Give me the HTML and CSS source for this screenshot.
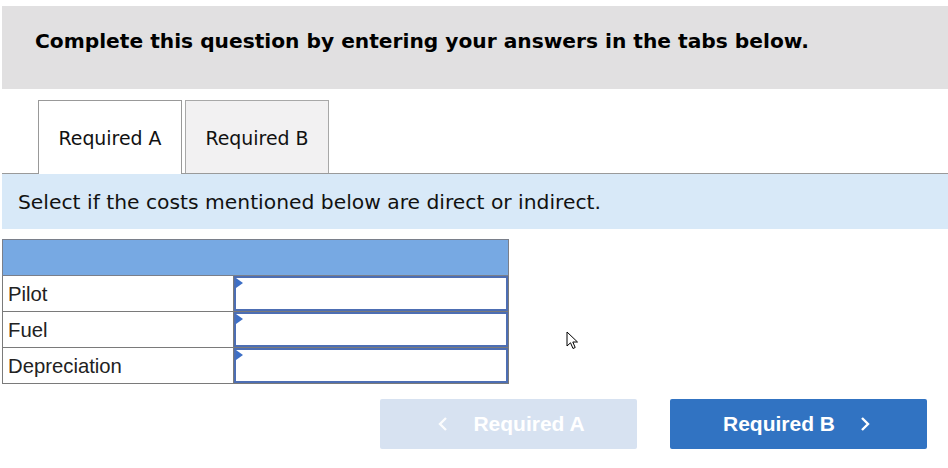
FILE: index.html
```html
<!DOCTYPE html>
<html>
<head>
<meta charset="utf-8">
<link rel="stylesheet" href="styles.css">
</head>
<body>
<div class="page">
  <div class="banner">
    <h1 class="title">Complete this question by entering your answers in the tabs below.</h1>
  </div>
  <div class="tabs">
    <div class="tab active">Required A</div>
    <div class="tab">Required B</div>
  </div>
  <div class="instr">Select if the costs mentioned below are direct or indirect.</div>
  <table class="grid">
    <colgroup><col class="w1"><col class="w2"></colgroup>
    <tr class="head"><td colspan="2"></td></tr>
    <tr><td class="c1">Pilot</td><td class="c2"><div class="sel"><span class="tri"></span></div></td></tr>
    <tr><td class="c1">Fuel</td><td class="c2"><div class="sel"><span class="tri"></span></div></td></tr>
    <tr><td class="c1">Depreciation</td><td class="c2"><div class="sel"><span class="tri"></span></div></td></tr>
  </table>
  <div class="nav">
    <button class="btn prev"><svg class="chev" width="10" height="16" viewBox="0 0 10 16"><polyline points="8,2 2,8 8,14" fill="none" stroke="#fff" stroke-width="2.4"/></svg><span>Required A</span></button>
    <button class="btn next"><span>Required B</span><svg class="chev" width="10" height="16" viewBox="0 0 10 16"><polyline points="2,2 8,8 2,14" fill="none" stroke="#fff" stroke-width="2.4"/></svg></button>
  </div>
  <svg class="cursor" width="14" height="20" viewBox="0 0 14 20"><path d="M1 1 L1 15 L4.5 11.8 L7 17.5 L9.2 16.5 L6.8 11 L11.5 11 Z" fill="#fff" stroke="#000" stroke-width="1"/></svg>
</div>
</body>
</html>
```

FILE: styles.css
```css
html, body { margin: 0; padding: 0; background: #fff; }
.page {
  position: relative;
  width: 948px;
  height: 468px;
  padding: 6px 0 0 2px;
  box-sizing: border-box;
}
.banner {
  background: #e1e0e1;
  height: 83px;
  box-sizing: border-box;
  padding: 23px 0 0 33px;
}
.title {
  margin: 0;
  font-family: "DejaVu Sans", Verdana, sans-serif;
  font-weight: bold;
  font-size: 20.2px;
  line-height: 24px;
  color: #000;
}
.tabs {
  display: flex;
  gap: 3px;
  margin-top: 11px;
  padding-left: 36px;
  border-bottom: 1px solid #9a9a9a;
  height: 73px;
  box-sizing: content-box;
}
.tab {
  width: 144px;
  height: 73px;
  box-sizing: border-box;
  border: 1px solid #a8a8a8;
  border-bottom: none;
  background: #f2f1f2;
  font-family: "DejaVu Sans", Verdana, sans-serif;
  font-size: 18.9px;
  color: #111;
  display: flex;
  align-items: center;
  justify-content: center;
  padding-top: 1px;
}
.tab.active {
  background: #fff;
  height: 74px;
  border-color: #999;
  margin-bottom: -1px;
  position: relative;
}
.instr {
  background: #d8e9f8;
  height: 55px;
  box-sizing: border-box;
  padding: 16px 0 0 16px;
  font-family: "DejaVu Sans", Verdana, sans-serif;
  font-size: 20.3px;
  line-height: 24px;
  color: #111;
}
.grid {
  margin-top: 10px;
  border-collapse: collapse;
  width: 507px;
  table-layout: fixed;
}
.grid .w1 { width: 231px; }
.grid td {
  border: 1px solid #7a7a7a;
  height: 36px;
  padding: 0;
  box-sizing: border-box;
}
.grid .head td { background: #77a9e3; border-color: #7a7f8a; }
.grid .c1 {
  font-family: "Liberation Sans", Arial, sans-serif;
  font-size: 20.3px;
  color: #222;
  padding-left: 5px;
  padding-top: 1px;
}
.grid .c2 { position: relative; }
.sel {
  position: absolute;
  inset: 0;
  border: 2px solid #4d6eb3;
  background: #fff;
}
.tri {
  position: absolute;
  left: 0;
  top: 0;
  width: 0;
  height: 0;
  border-top: 5px solid transparent;
  border-bottom: 5px solid transparent;
  border-left: 7px solid #3d6fc6;
}
.nav {
  display: flex;
  justify-content: flex-end;
  gap: 33px;
  padding-right: 21px;
  margin-top: 15px;
}
.btn {
  width: 257px;
  height: 50px;
  border: none;
  border-radius: 2px;
  display: flex;
  align-items: center;
  justify-content: center;
  gap: 25px;
  font-family: "Liberation Sans", Arial, sans-serif;
  font-weight: bold;
  font-size: 21px;
  color: #fff;
  padding: 0;
}
.btn.prev { background: #d7e2f1; padding-left: 6px; }
.btn.next { background: #3173c2; padding-right: 4px; }
.btn.prev .chev { opacity: 0.9; }
.cursor {
  position: absolute;
  left: 566px;
  top: 331px;
}
```
